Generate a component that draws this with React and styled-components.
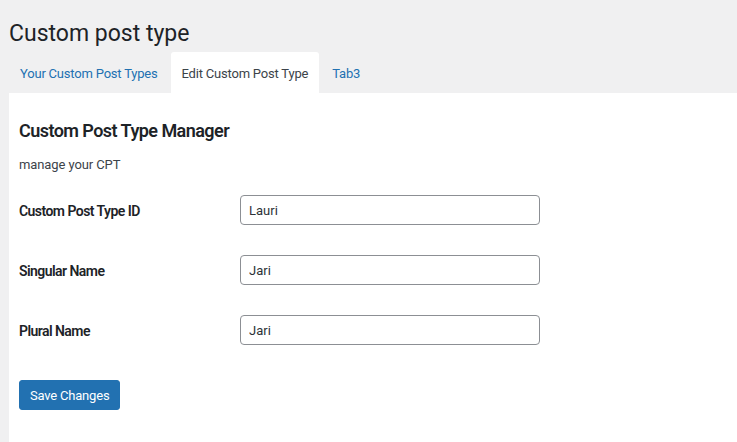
import React from 'react';
import styled, { createGlobalStyle } from 'styled-components';

const GlobalStyle = createGlobalStyle`
  html, body {
    margin: 0;
    padding: 0;
    background: #f0f0f1;
  }
  body {
    font-family: Roboto, "Liberation Sans", sans-serif;
    color: #3c434a;
  }
  * { box-sizing: border-box; }
`;

const Page = styled.div`
  padding-left: 9px;
  min-height: 442px;
  display: flex;
  flex-direction: column;
`;

const Title = styled.h1`
  margin: 19px 0 0;
  font-size: 23px;
  line-height: 30px;
  font-weight: 400;
  color: #1d2327;
`;

const TabBar = styled.nav`
  display: flex;
  gap: 2px;
  margin-top: 3px;
`;

const Tab = styled.a`
  display: block;
  padding: 11px 11px 9px;
  font-size: 13px;
  line-height: 21px;
  letter-spacing: -0.2px;
  text-decoration: none;
  border-radius: 3px 3px 0 0;
  color: ${(p) => (p.$active ? '#3c434a' : '#2271b1')};
  background: ${(p) => (p.$active ? '#ffffff' : 'transparent')};
  cursor: pointer;
`;

const Panel = styled.section`
  flex: 1;
  background: #ffffff;
  padding: 26px 10px 30px;
`;

const Heading = styled.h2`
  margin: 0;
  font-size: 18px;
  line-height: 24px;
  font-weight: 600;
  letter-spacing: -0.55px;
  color: #1d2327;
`;

const Intro = styled.p`
  margin: 12px 0 0;
  font-size: 13px;
  line-height: 20px;
  letter-spacing: -0.1px;
  color: #3c434a;
`;

const Form = styled.form`
  margin-top: 5px;
  display: flex;
  flex-direction: column;
`;

const Row = styled.div`
  display: grid;
  grid-template-columns: 221px 300px;
  align-items: center;
  height: 60px;
`;

const Label = styled.label`
  padding-top: 1px;
  font-size: 14px;
  line-height: 20px;
  font-weight: 600;
  letter-spacing: -0.55px;
  color: #1d2327;
`;

const TextInput = styled.input`
  width: 300px;
  height: 30px;
  padding: 0 8px;
  border: 1px solid #8c8f94;
  border-radius: 4px;
  font-family: inherit;
  font-size: 13px;
  color: #2c3338;
  background: #fff;
  outline: none;
`;

const SaveButton = styled.button`
  align-self: flex-start;
  margin-top: 20px;
  height: 30px;
  padding: 0 10px;
  border: 1px solid #2271b1;
  border-radius: 3px;
  background: #2271b1;
  color: #ffffff;
  font-family: inherit;
  font-size: 13px;
  letter-spacing: -0.2px;
  cursor: pointer;
`;

const fields = [
  { id: 'cpt-id', label: 'Custom Post Type ID', value: 'Lauri' },
  { id: 'singular', label: 'Singular Name', value: 'Jari' },
  { id: 'plural', label: 'Plural Name', value: 'Jari' },
];

export default function App() {
  return (
    <>
      <GlobalStyle />
      <Page>
        <Title>Custom post type</Title>
        <TabBar>
          <Tab>Your Custom Post Types</Tab>
          <Tab $active>Edit Custom Post Type</Tab>
          <Tab>Tab3</Tab>
        </TabBar>
        <Panel>
          <Heading>Custom Post Type Manager</Heading>
          <Intro>manage your CPT</Intro>
          <Form onSubmit={(e) => e.preventDefault()}>
            {fields.map((f) => (
              <Row key={f.id}>
                <Label htmlFor={f.id}>{f.label}</Label>
                <TextInput id={f.id} type="text" defaultValue={f.value} />
              </Row>
            ))}
            <SaveButton type="submit">Save Changes</SaveButton>
          </Form>
        </Panel>
      </Page>
    </>
  );
}
